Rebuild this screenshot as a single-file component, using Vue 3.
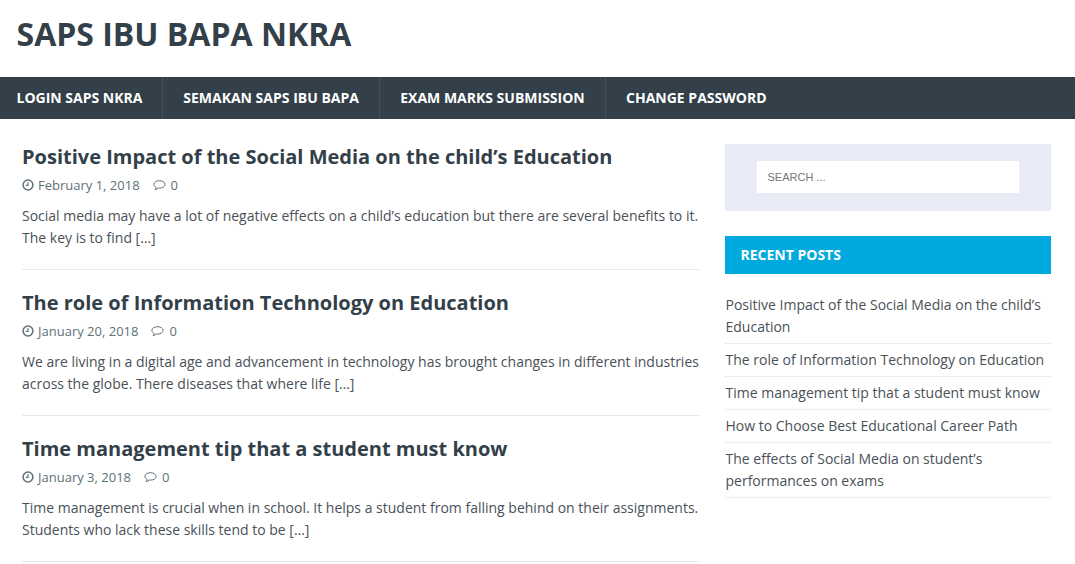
<script setup>
const nav = ['LOGIN SAPS NKRA', 'SEMAKAN SAPS IBU BAPA', 'EXAM MARKS SUBMISSION', 'CHANGE PASSWORD']
const posts = [
  { title: 'Positive Impact of the Social Media on the child’s Education', date: 'February 1, 2018', text: 'Social media may have a lot of negative effects on a child’s education but there are several benefits to it. The key is to find […]' },
  { title: 'The role of Information Technology on Education', date: 'January 20, 2018', text: 'We are living in a digital age and advancement in technology has brought changes in different industries across the globe. There diseases that where life […]' },
  { title: 'Time management tip that a student must know', date: 'January 3, 2018', text: 'Time management is crucial when in school. It helps a student from falling behind on their assignments. Students who lack these skills tend to be […]' },
]
const recent = [
  'Positive Impact of the Social Media on the child’s Education',
  'The role of Information Technology on Education',
  'Time management tip that a student must know',
  'How to Choose Best Educational Career Path',
  'The effects of Social Media on student’s performances on exams',
]
</script>

<template>
  <div class="page">
    <header class="site-header"><h1>SAPS IBU BAPA NKRA</h1></header>
    <nav class="nav">
      <a v-for="n in nav" :key="n" class="nav-item">{{ n }}</a>
    </nav>
    <div class="content">
      <main class="main">
        <article v-for="p in posts" :key="p.title" class="post">
          <h2>{{ p.title }}</h2>
          <div class="meta">
            <svg class="ic" width="12" height="12" viewBox="0 0 12 12"><circle cx="6" cy="6" r="4.9" fill="none" stroke="currentColor" stroke-width="1.5"/><path d="M6 3v3.4H3.8" fill="none" stroke="currentColor" stroke-width="1.1"/></svg>
            <span class="date">{{ p.date }}</span>
            <svg class="ic bubble" width="13" height="12" viewBox="0 0 13 12"><path d="M6.5 1.700c-3 0-5.600 1.600-5.600 3.700 0 1.300 1 2.400 2.300 3-.1.800-.6 1.600-1.200 2.200 1.300-.2 2.500-.8 3.300-1.600.4.100.8.100 1.200.100 3 0 5.600-1.600 5.600-3.700s-2.600-3.700-5.600-3.700z" fill="none" stroke="currentColor" stroke-width="1"/></svg>
            <span>0</span>
          </div>
          <p>{{ p.text }}</p>
        </article>
      </main>
      <aside class="side">
        <div class="search"><input class="search-input" placeholder="SEARCH ..." /></div>
        <h3 class="widget-title">RECENT POSTS</h3>
        <ul class="recent">
          <li v-for="r in recent" :key="r">{{ r }}</li>
        </ul>
      </aside>
    </div>
  </div>
</template>

<style>
html, body { margin: 0; background: #fff; }
</style>

<style scoped>
.page { font-family: "Open Sans", sans-serif; color: #333f49; width: 1075px; height: 564px; overflow: hidden; }
.site-header { height: 77px; padding-left: 16.5px; box-sizing: border-box; }
.site-header h1 { margin: 0; padding-top: 12px; font-size: 32px; line-height: 43px; font-weight: 700; color: #333f49; }
.nav { display: flex; height: 42px; background: #333f49; }
.nav-item { padding: 0 20.5px 0 19.8px; line-height: 42px; font-size: 14px; font-weight: 700; color: #fff; border-right: 1px solid #475059; }
.nav-item:first-child { padding: 0 20px 0 16.5px; }
.nav-item:last-child { border-right: none; }
.content { display: flex; padding: 24px 24px 0 22px; justify-content: space-between; }
.main { width: 678px; }
.post { border-bottom: 1px solid #e9e9e9; height: 126px; margin-bottom: 19px; }
.post h2 { margin: 0; font-size: 20px; line-height: 27px; font-weight: 700; color: #333f49; }
.meta { display: flex; align-items: center; margin-top: 6px; font-size: 13px; line-height: 18px; color: #5e7078; }
.ic { flex: none; margin-right: 4px; }
.bubble { margin-left: 13px; margin-right: 5px; }
.post p { margin: 11px 0 0; font-size: 14px; line-height: 22px; color: #4a5158; }
.side { width: 326px; padding-top: 1px; }
.search { background: #e9ebf6; height: 67px; box-sizing: border-box; padding: 17px 32px 0; }
.search-input { display: block; width: 262px; height: 32px; box-sizing: border-box; border: none; background: #fff; padding: 0 10.5px; margin: 0; font-family: "Liberation Sans", sans-serif; font-size: 11px; outline: none; color: #777; }
.search-input::placeholder { color: #757575; opacity: 1; }
.widget-title { margin: 25px 0 0; background: #00aadf; color: #fff; height: 38px; line-height: 38px; padding-left: 15.5px; font-size: 14px; font-weight: 700; }
.recent { list-style: none; margin: 20px 0 0; padding: 0; }
.recent li { padding: 0 0.5px 5px; margin-bottom: 5px; font-size: 14px; line-height: 22px; color: #4a5158; border-bottom: 1px dotted #ddd; }
</style>
